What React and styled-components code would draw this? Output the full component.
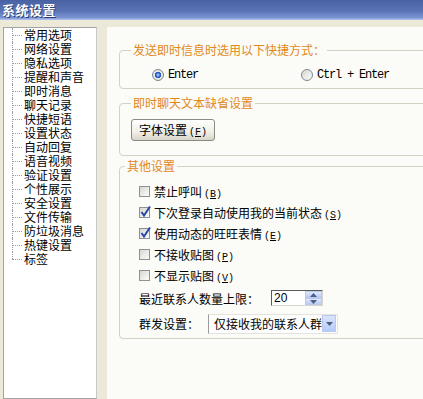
import React from "react";
import styled, { createGlobalStyle } from "styled-components";

const GlobalStyle = createGlobalStyle`
  html, body {
    margin: 0;
    padding: 0;
    height: 100%;
    overflow: hidden;
  }
  body {
    background: #ece9d8;
    font-family: "Noto Sans CJK SC", "Liberation Sans", sans-serif;
    font-size: 12px;
    color: #000;
  }
`;

const Window = styled.div`
  height: 100vh;
  display: flex;
  flex-direction: column;
`;

const TitleBar = styled.div`
  flex: none;
  height: 20px;
  padding-left: 2px;
  background: linear-gradient(#4761a2, #5a74b6 55%, #7a93d2 88%, #b4c5ee);
  color: #fff;
  font-size: 13px;
  font-weight: bold;
  line-height: 19px;
  letter-spacing: 0.5px;
  text-shadow: 1px 1px 0 #2c3d70;
`;

const Main = styled.div`
  flex: 1;
  min-height: 0;
  display: flex;
  gap: 10px;
  padding: 7px 0 0 3px;
`;

const Tree = styled.ul`
  flex: none;
  box-sizing: border-box;
  width: 94px;
  margin: 0;
  padding: 0;
  list-style: none;
  background: #fff;
  border: 1px solid #a3a3a3;
  border-right-color: #c8c8c8;
`;

const TreeItem = styled.li`
  position: relative;
  height: 14px;
  line-height: 14px;
  padding-left: 20px;
  white-space: nowrap;

  &::before {
    content: "";
    position: absolute;
    left: 8px;
    top: 0;
    height: ${({ $last }) => ($last ? "7px" : "14px")};
    border-left: 1px dotted #9a9a9a;
  }
  &::after {
    content: "";
    position: absolute;
    left: 8px;
    top: 7px;
    width: 10px;
    border-top: 1px dotted #9a9a9a;
  }
`;

const Content = styled.div`
  flex: 1;
  min-width: 0;
  overflow: hidden;
  background: #fbfbf8;
  padding-left: 12px;
`;

const Group = styled.fieldset`
  margin: ${({ $top }) => $top}px -30px 0 0;
  padding: 0;
  min-width: 0;
  border: 1px solid #d3d1c2;
  border-radius: 4px;
`;

const Legend = styled.legend`
  margin-left: ${({ $offset }) => $offset}px;
  padding: 0 2px;
  font-size: 12px;
  line-height: 12px;
  color: #e2891a;
`;

const RadioRow = styled.div`
  display: grid;
  grid-template-columns: 149px auto;
  align-items: center;
  height: 14px;
  padding: 12px 0 6px 32px;
`;

const Option = styled.label`
  display: flex;
  align-items: center;
  gap: 4px;
`;

const Radio = styled.span`
  box-sizing: border-box;
  width: 12px;
  height: 12px;
  border-radius: 50%;
  border: 1px solid #7d8793;
  background: ${({ $on }) =>
    $on
      ? "radial-gradient(circle, #8fb6f2 0 1px, #2f62c4 2px 3px, #e6e6e0 3.5px)"
      : "linear-gradient(135deg, #d9d9d2, #fafaf8)"};
`;

const Mono = styled.span`
  font-family: "Liberation Mono", "DejaVu Sans Mono", monospace;
  font-size: 12px;
  letter-spacing: -1.2px;
  line-height: 14px;
`;

const ButtonRow = styled.div`
  padding: 10px 0 14px 11px;
`;

const Button = styled.button`
  box-sizing: border-box;
  width: 84px;
  height: 22px;
  padding: 0;
  border: 1px solid #8a8a84;
  border-radius: 3px;
  background: linear-gradient(#fefefd, #f0efe8 60%, #d8d5c8);
  font-family: inherit;
  font-size: 12px;
  line-height: 20px;
  color: #000;
`;

const Key = styled.span`
  font-family: "Liberation Mono", "DejaVu Sans Mono", monospace;
  font-size: 10px;
  margin-left: 2px;

  u {
    text-underline-offset: 1px;
  }
`;

const Options = styled.div`
  padding: 9px 0 1px 19px;
`;

const Row = styled.div`
  display: flex;
  align-items: center;
  height: ${({ $h }) => $h}px;
  gap: ${({ $gap }) => $gap}px;
  white-space: nowrap;
`;

const CheckBox = styled.span`
  position: relative;
  flex: none;
  box-sizing: border-box;
  width: 11px;
  height: 11px;
  border: 1px solid #8e9096;
  background: linear-gradient(135deg, #d8d8d2, #fbfbf9);

  svg {
    position: absolute;
    left: -1px;
    top: -3px;
    overflow: visible;
  }
`;

const Spin = styled.div`
  display: flex;
  box-sizing: border-box;
  width: 52px;
  height: 16px;
  border: 1px solid;
  border-color: #5a5a5a #d8d6cc #d8d6cc #5a5a5a;
  background: #fff;
`;

const SpinValue = styled.span`
  flex: 1;
  padding-left: 2px;
  font-family: "Liberation Sans", sans-serif;
  font-size: 12px;
  line-height: 14px;
`;

const SpinButtons = styled.div`
  display: flex;
  flex-direction: column;
  width: 17px;
`;

const SpinButton = styled.span`
  flex: 1;
  display: flex;
  align-items: center;
  justify-content: center;
  border: 1px solid #b9c9ef;
  background: linear-gradient(#dfe8fd, #b9cbf6);
`;

const Select = styled.div`
  display: flex;
  align-items: center;
  box-sizing: border-box;
  width: 130px;
  height: 20px;
  border: 1px solid;
  border-color: #e4e3dc #e4e3dc #e4e3dc #9c9c9c;
  background: #fefefe;
  padding: 1px;
`;

const SelectText = styled.span`
  flex: 1;
  padding-left: 4px;
  line-height: 16px;
`;

const SelectArrow = styled.span`
  display: flex;
  align-items: center;
  justify-content: center;
  width: 15px;
  height: 17px;
  border: 1px solid #b8c8f0;
  box-sizing: border-box;
  background: linear-gradient(#d9e4fd, #b7cbf8);
`;

const treeItems = [
  "常用选项",
  "网络设置",
  "隐私选项",
  "提醒和声音",
  "即时消息",
  "聊天记录",
  "快捷短语",
  "设置状态",
  "自动回复",
  "语音视频",
  "验证设置",
  "个性展示",
  "安全设置",
  "文件传输",
  "防垃圾消息",
  "热键设置",
  "标签",
];

const checks = [
  { text: "禁止呼叫", key: "B", on: false },
  { text: "下次登录自动使用我的当前状态", key: "S", on: true },
  { text: "使用动态的旺旺表情", key: "E", on: true },
  { text: "不接收贴图", key: "P", on: false },
  { text: "不显示贴图", key: "V", on: false },
];

const Arrow = ({ up }) => (
  <svg width="7" height="4" viewBox="0 0 7 4">
    <path d={up ? "M0 4 L3.5 0 L7 4 Z" : "M0 0 L3.5 4 L7 0 Z"} fill="#4d5f86" />
  </svg>
);

const Mnemonic = ({ k }) => (
  <Key>
    (<u>{k}</u>)
  </Key>
);

export default function App() {
  return (
    <Window>
      <GlobalStyle />
      <TitleBar>系统设置</TitleBar>
      <Main>
        <Tree>
          {treeItems.map((t, i) => (
            <TreeItem key={t} $last={i === treeItems.length - 1}>
              {t}
            </TreeItem>
          ))}
        </Tree>
        <Content>
          <Group $top={17}>
            <Legend $offset={11}>发送即时信息时选用以下快捷方式：</Legend>
            <RadioRow>
              <Option>
                <Radio $on />
                <Mono>Enter</Mono>
              </Option>
              <Option>
                <Radio />
                <Mono>Ctrl + Enter</Mono>
              </Option>
            </RadioRow>
          </Group>

          <Group $top={8}>
            <Legend $offset={11}>即时聊天文本缺省设置</Legend>
            <ButtonRow>
              <Button>
                字体设置<Mnemonic k="F" />
              </Button>
            </ButtonRow>
          </Group>

          <Group $top={4}>
            <Legend $offset={5}>其他设置</Legend>
            <Options>
              {checks.map((c) => (
                <Row key={c.text} $h={21} $gap={4}>
                  <CheckBox>
                    {c.on && (
                      <svg width="13" height="13" viewBox="0 0 13 13">
                        <path
                          d="M2.5 7 L5 10.5 L11 1.5"
                          fill="none"
                          stroke="#2947a8"
                          strokeWidth="2"
                        />
                      </svg>
                    )}
                  </CheckBox>
                  <span>
                    {c.text}
                    <Mnemonic k={c.key} />
                  </span>
                </Row>
              ))}
              <Row $h={24} $gap={12}>
                <span>最近联系人数量上限：</span>
                <Spin>
                  <SpinValue>20</SpinValue>
                  <SpinButtons>
                    <SpinButton>
                      <Arrow up />
                    </SpinButton>
                    <SpinButton>
                      <Arrow />
                    </SpinButton>
                  </SpinButtons>
                </Spin>
              </Row>
              <Row $h={27} $gap={9}>
                <span>群发设置：</span>
                <Select>
                  <SelectText>仅接收我的联系人群</SelectText>
                  <SelectArrow>
                    <Arrow />
                  </SelectArrow>
                </Select>
              </Row>
            </Options>
          </Group>
        </Content>
      </Main>
    </Window>
  );
}
